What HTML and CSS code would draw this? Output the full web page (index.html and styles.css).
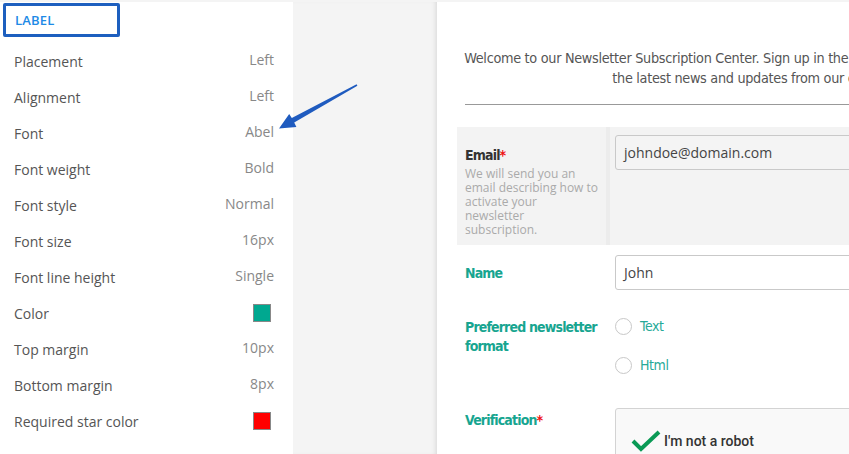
FILE: index.html
```html
<!DOCTYPE html>
<html>
<head>
<meta charset="utf-8">
<link rel="stylesheet" href="styles.css">
</head>
<body>
<div class="page">
  <aside class="panel">
    <div class="panel-head">LABEL</div>
    <ul class="props">
      <li class="prop"><span class="prop-name">Placement</span><span class="prop-val">Left</span></li>
      <li class="prop"><span class="prop-name">Alignment</span><span class="prop-val">Left</span></li>
      <li class="prop"><span class="prop-name">Font</span><span class="prop-val">Abel</span></li>
      <li class="prop"><span class="prop-name">Font weight</span><span class="prop-val">Bold</span></li>
      <li class="prop"><span class="prop-name">Font style</span><span class="prop-val">Normal</span></li>
      <li class="prop"><span class="prop-name">Font size</span><span class="prop-val">16px</span></li>
      <li class="prop"><span class="prop-name">Font line height</span><span class="prop-val">Single</span></li>
      <li class="prop"><span class="prop-name">Color</span><span class="swatch swatch-teal"></span></li>
      <li class="prop"><span class="prop-name">Top margin</span><span class="prop-val">10px</span></li>
      <li class="prop"><span class="prop-name">Bottom margin</span><span class="prop-val">8px</span></li>
      <li class="prop"><span class="prop-name">Required star color</span><span class="swatch swatch-red"></span></li>
    </ul>
  </aside>
  <div class="gutter"></div>
  <main class="content">
    <div class="intro">
      <p class="intro-text">Welcome to our Newsletter Subscription Center. Sign up in the newsletter form below to receive<br>the latest news and updates from our company.</p>
    </div>
    <div class="rule"></div>
    <form class="form">
      <div class="row row-hl">
        <div class="lbl-col">
          <div class="lbl lbl-dark">Email<span class="star">*</span></div>
          <div class="desc">We will send you an email describing how to activate your newsletter subscription.</div>
        </div>
        <div class="fld-col">
          <div class="input input-gray">johndoe@domain.com</div>
        </div>
      </div>
      <div class="row row-name">
        <div class="lbl-col"><div class="lbl">Name</div></div>
        <div class="fld-col"><div class="input">John</div></div>
      </div>
      <div class="row row-format">
        <div class="lbl-col"><div class="lbl">Preferred newsletter format</div></div>
        <div class="fld-col radios">
          <label class="radio"><span class="radio-dot"></span><span class="radio-txt">Text</span></label>
          <label class="radio"><span class="radio-dot"></span><span class="radio-txt">Html</span></label>
        </div>
      </div>
      <div class="row row-verify">
        <div class="lbl-col"><div class="lbl">Verification<span class="star">*</span></div></div>
        <div class="fld-col">
          <div class="captcha">
            <svg class="check" width="30" height="22" viewBox="0 0 30 22"><path d="M2 11 L10 19 L28 2" fill="none" stroke="#0a9a55" stroke-width="4"/></svg>
            <span class="captcha-txt">I'm not a robot</span>
          </div>
        </div>
      </div>
    </form>
  </main>
  <svg class="arrow" width="849" height="454" viewBox="0 0 849 454"><path d="M356.6,84.3 L357.4,85.7 L294.2,122.5 L296.4,127 L279,128.5 L289.2,114 L291.8,118.1 Z" fill="#1f5bbf"/></svg>
</div>
</body>
</html>
```

FILE: styles.css
```css
* { box-sizing: border-box; }
html, body { margin: 0; padding: 0; }
body { background: #f4f4f4; width: 849px; height: 454px; overflow: hidden; }
.page { position: relative; display: flex; height: 454px; padding-top: 2px; }
.panel {
  width: 293px; flex: none; background: #fff;
  font-family: "Open Sans", sans-serif; font-size: 14px;
  padding: 1px 0 0 3px;
}
.panel-head {
  width: 117px; height: 34px; border: 3px solid #1d5fbf; border-radius: 2px;
  color: #1e8ae6; font-weight: 600; font-size: 13px; letter-spacing: 0.2px;
  padding-left: 9px; line-height: 28px;
}
.props { list-style: none; margin: 6px 0 0; padding: 0; }
.prop {
  display: flex; justify-content: space-between; align-items: center;
  height: 36px; padding: 0 19px 0 11px;
}
.prop-name { color: #555; }
.prop-val { color: #888; margin-bottom: 4px; }
.swatch { width: 18px; height: 18px; border: 1px solid #888; margin-right: 3px; }
.swatch-teal { background: #00a890; }
.swatch-red { background: #ff0000; }
.gutter {
  width: 144px; flex: none; background: #f4f4f4;
  box-shadow: inset -4px 0 5px -3px rgba(0,0,0,0.12);
}
.content { flex: 1; background: #fff; overflow: hidden; padding: 0 0 0 20px; }
.intro { width: 601px; margin-left: 2px; padding-top: 46px; }
.intro-text {
  margin: 0; text-align: center; color: #555;
  font-family: "DejaVu Sans Condensed", "DejaVu Sans", sans-serif; font-stretch: condensed;
  font-size: 14.3px; line-height: 20px; white-space: nowrap; letter-spacing: -0.3px;
}
.rule { margin: 16px 0 0 8px; width: 600px; border-top: 1px solid #999; }
.form { margin-top: 22px; width: 560px; }
.row { display: grid; grid-template-columns: 153px 1fr; }
.row-hl { background: #f3f3f3; height: 118px; }
.row-hl .lbl-col { border-right: 4px solid #ececec; padding-top: 19px; }
.lbl-col { padding-left: 8px; }
.fld-col { padding-left: 5px; }
.lbl {
  font-family: "DejaVu Sans Condensed", "DejaVu Sans", sans-serif; font-stretch: condensed;
  font-weight: bold; font-size: 14px; line-height: 19px; color: #17a590; letter-spacing: -0.85px;
}
.lbl-dark { color: #333; }
.star { color: #ee1111; }
.desc {
  font-family: "Open Sans", sans-serif; font-size: 12px; line-height: 14px; color: #aaa;
  margin-top: 2px; padding-right: 7px;
}
.input {
  height: 35px; border: 1px solid #c9c9c9; border-radius: 3px; background: #fff;
  font-family: "Open Sans", sans-serif; font-size: 14px; color: #444;
  line-height: 33px; padding-left: 8px;
}
.input-gray { background: #f4f4f4; margin-top: 8px; }
.row-name { padding-top: 10px; height: 56px; }
.row-name .lbl { padding-top: 9px; }
.row-format { padding-top: 17px; height: 104px; }
.radios { display: flex; flex-direction: column; gap: 21px; margin-top: -1px; }
.radio { display: flex; align-items: center; gap: 8px; height: 18px; }
.radio-dot { width: 17px; height: 17px; border: 1px solid #c8c8c8; border-radius: 50%; background: #fff; }
.radio-txt {
  font-family: "DejaVu Sans Condensed", "DejaVu Sans", sans-serif; font-stretch: condensed;
  font-size: 14px; color: #26aa98; letter-spacing: -0.4px;
}
.row-verify { padding-top: 3px; }
.row-verify .lbl { padding-top: 3px; }
.captcha {
  height: 80px; width: 300px; background: #f9f9f9; border: 1px solid #d3d3d3; border-radius: 3px;
  display: flex; align-items: flex-start; padding: 21px 0 0 15px; gap: 3px;
}
.check { flex: none; }
.captcha-txt {
  font-family: Roboto, sans-serif; font-size: 14px; font-weight: 500; color: #333; margin-top: 3px;
}
.arrow { position: absolute; left: 0; top: 0; pointer-events: none; }
```
